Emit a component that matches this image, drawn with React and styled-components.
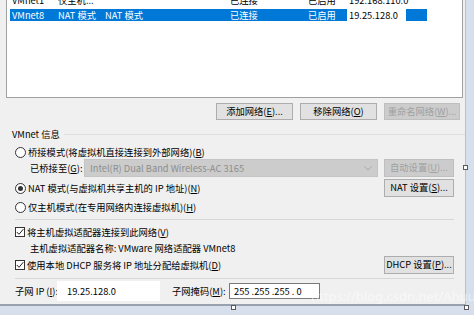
import styled, { createGlobalStyle } from "styled-components";

const GlobalStyle = createGlobalStyle`
  html, body {
    margin: 0;
    padding: 0;
  }
  body {
    background: #d9e1ec;
    font-family: "Noto Sans CJK SC", "Noto Sans", sans-serif;
    font-size: 9.3px;
    color: #000;
  }
  * { box-sizing: border-box; }
`;

const Screen = styled.div`
  position: relative;
  width: 474px;
  height: 315px;
  overflow: hidden;
  background: #d6dfeb;
`;

const Dialog = styled.div`
  width: 466px;
  height: 306px;
  background: #f0f0f0;
  border-right: 1px solid #b7c1ce;
  border-bottom: 2px solid #98a1ad;
  display: flex;
  flex-direction: column;
`;

const ListView = styled.div`
  margin-left: 6px;
  width: 457px;
  height: 98px;
  flex-shrink: 0;
  background: #fff;
  border: 1px solid #a0a0a0;
  border-top: none;
  overflow: hidden;
`;

const ListRows = styled.div`
  margin-top: -6px;
  padding-left: 3px;
`;

const Row = styled.div`
  display: flex;
  align-items: center;
  width: 417px;
  height: 12px;
  line-height: 12px;
  margin-bottom: ${(p) => (p.$selected ? 0 : 3)}px;
  background: ${(p) => (p.$selected ? "#0078d7" : "transparent")};
  color: ${(p) => (p.$selected ? "#fff" : "#000")};
`;

const Cell = styled.div`
  width: ${(p) => p.$w}px;
  padding-left: 2px;
  white-space: nowrap;
  overflow: hidden;
`;

const EditCell = styled(Cell)`
  background: #fff;
  color: #000;
  height: 12px;
`;

const ButtonBar = styled.div`
  display: flex;
  justify-content: flex-end;
  gap: 7px;
  margin-top: 5px;
  padding-right: 5px;
`;

const Button = styled.button`
  width: ${(p) => p.$w}px;
  height: ${(p) => p.$h || 17}px;
  margin-left: ${(p) => p.$ml || 0};
  padding: 0;
  font: inherit;
  line-height: 1;
  white-space: nowrap;
  background: ${(p) => (p.disabled ? "#cccccc" : "#e1e1e1")};
  border: 1px solid ${(p) => (p.disabled ? "#bfbfbf" : "#adadad")};
  color: ${(p) => (p.disabled ? "#a0a0a0" : "#000")};
`;

const Key = styled.span`
  text-decoration: underline;
`;

const GroupHead = styled.div`
  display: flex;
  align-items: center;
  gap: 4px;
  height: 12px;
  margin: 8px 0 0 12px;
  &::after {
    content: "";
    flex: 1;
    border-top: 1px solid #dedede;
  }
`;

const Group = styled.div`
  display: flex;
  flex-direction: column;
  padding: 0 11px 0 15px;
`;

const OptionRow = styled.div`
  display: flex;
  align-items: center;
  gap: ${(p) => (p.$tight ? 0 : 2)}px;
  height: ${(p) => p.$h || 12}px;
  margin-top: ${(p) => p.$mt || 0}px;
  padding-left: ${(p) => p.$indent || 0}px;
  white-space: nowrap;
`;

const Radio = styled.span`
  position: relative;
  width: 11px;
  height: 11px;
  flex-shrink: 0;
  border: 1px solid #333;
  border-radius: 50%;
  background: #fff;
  &::after {
    content: "";
    display: ${(p) => (p.$checked ? "block" : "none")};
    position: absolute;
    left: 2px;
    top: 2px;
    width: 5px;
    height: 5px;
    border-radius: 50%;
    background: #333;
  }
`;

const Box = styled.span`
  display: flex;
  align-items: center;
  justify-content: center;
  width: 10px;
  height: 10px;
  flex-shrink: 0;
  border: 1px solid #333;
  background: #fff;
`;

const Spacer = styled.div`
  flex: 1;
`;

const FieldLabel = styled.span`
  width: ${(p) => p.$w}px;
  margin-left: ${(p) => p.$ml || 0}px;
  flex-shrink: 0;
  white-space: nowrap;
`;

const Select = styled.div`
  display: flex;
  align-items: center;
  justify-content: space-between;
  width: 294px;
  height: 18px;
  padding: 0 5px 0 5px;
  background: #cccccc;
  border: 1px solid #c4c4c4;
  color: #8d8d8d;
`;

const Separator = styled.div`
  height: 1px;
  margin-top: ${(p) => p.$mt}px;
  background: #d7d7d7;
`;

const PlainField = styled.div`
  display: flex;
  align-items: center;
  width: 103px;
  height: 20px;
  padding-left: 10px;
  background: #fff;
`;

const MaskField = styled.div`
  display: flex;
  align-items: center;
  width: 91px;
  height: 16px;
  padding-left: 4px;
  background: #fff;
  border: 1px solid #7a7a7a;
  white-space: pre;
`;

const Watermark = styled.div`
  position: absolute;
  left: 311px;
  top: 287px;
  font-family: "Noto Sans", sans-serif;
  font-size: 13px;
  color: rgba(255, 255, 255, 0.55);
  white-space: nowrap;
`;

const Handle = styled.span`
  position: absolute;
  left: ${(p) => p.$x}px;
  top: ${(p) => p.$y}px;
  width: 5px;
  height: 5px;
  background: #fff;
  border: 1px solid #5a5a5a;
`;

const cols = [46, 47, 125, 78, 41];

const Check = () => (
  <svg width="8" height="8" viewBox="0 0 8 8">
    <polyline points="0.8,4 3,6.3 7.3,1.2" fill="none" stroke="#222" strokeWidth="1" />
  </svg>
);

const Chevron = () => (
  <svg width="8" height="5" viewBox="0 0 8 5">
    <polyline points="0.5,0.5 4,4 7.5,0.5" fill="none" stroke="#a8a8a8" strokeWidth="1" />
  </svg>
);

export default function App() {
  const rows = [
    ["VMnet1", "仅主机...", "", "已连接", "已启用", "192.168.110.0"],
    ["VMnet8", "NAT 模式", "NAT 模式", "已连接", "已启用", "19.25.128.0"],
  ];
  return (
    <Screen>
      <GlobalStyle />
      <Dialog>
        <ListView>
          <ListRows>
            {rows.map((r, i) => (
              <Row key={r[0]} $selected={i === 1}>
                {cols.map((w, j) => (
                  <Cell key={j} $w={w}>{r[j]}</Cell>
                ))}
                {i === 1 ? <EditCell $w={59}>{r[5]}</EditCell> : <Cell $w={70}>{r[5]}</Cell>}
              </Row>
            ))}
          </ListRows>
        </ListView>

        <ButtonBar>
          <Button $w={77}>添加网络(<Key>E</Key>)...</Button>
          <Button $w={77}>移除网络(<Key>O</Key>)</Button>
          <Button $w={76} disabled>重命名网络(<Key>W</Key>)...</Button>
        </ButtonBar>

        <GroupHead>VMnet 信息</GroupHead>
        <Group>
          <OptionRow $mt={6}>
            <Radio />
            <span>桥接模式(将虚拟机直接连接到外部网络)(<Key>B</Key>)</span>
          </OptionRow>
          <OptionRow $h={18} $mt={1} $indent={15} $tight>
            <FieldLabel $w={54}>已桥接至(<Key>G</Key>):</FieldLabel>
            <Select>
              <span>Intel(R) Dual Band Wireless-AC 3165</span>
              <Chevron />
            </Select>
            <Button $w={70} $h={18} $ml="6px" disabled>自动设置(<Key>U</Key>)...</Button>
          </OptionRow>
          <OptionRow $h={18} $mt={2}>
            <Radio $checked />
            <span>NAT 模式(与虚拟机共享主机的 IP 地址)(<Key>N</Key>)</span>
            <Spacer />
            <Button $w={70} $h={18}>NAT 设置(<Key>S</Key>)...</Button>
          </OptionRow>
          <OptionRow $mt={4}>
            <Radio />
            <span>仅主机模式(在专用网络内连接虚拟机)(<Key>H</Key>)</span>
          </OptionRow>
          <Separator $mt={6} />
          <OptionRow $mt={6}>
            <Box><Check /></Box>
            <span>将主机虚拟适配器连接到此网络(<Key>V</Key>)</span>
          </OptionRow>
          <OptionRow $mt={4} $indent={15}>
            主机虚拟适配器名称: VMware 网络适配器 VMnet8
          </OptionRow>
          <OptionRow $h={18} $mt={2}>
            <Box><Check /></Box>
            <span>使用本地 DHCP 服务将 IP 地址分配给虚拟机(<Key>D</Key>)</span>
            <Spacer />
            <Button $w={70} $h={18}>DHCP 设置(<Key>P</Key>)...</Button>
          </OptionRow>
          <Separator $mt={4} />
          <OptionRow $h={20} $mt={2} $tight>
            <FieldLabel $w={42}>子网 IP (<Key>I</Key>):</FieldLabel>
            <PlainField>19.25.128.0</PlainField>
            <FieldLabel $w={57} $ml={12}>子网掩码(<Key>M</Key>):</FieldLabel>
            <MaskField>255 .255 .255 . 0</MaskField>
          </OptionRow>
        </Group>
      </Dialog>
      <Watermark>https://blog.csdn.net/Ahuuua</Watermark>
      <Handle $x={463} $y={165} />
      <Handle $x={231} $y={305} />
      <Handle $x={464} $y={305} />
    </Screen>
  );
}
